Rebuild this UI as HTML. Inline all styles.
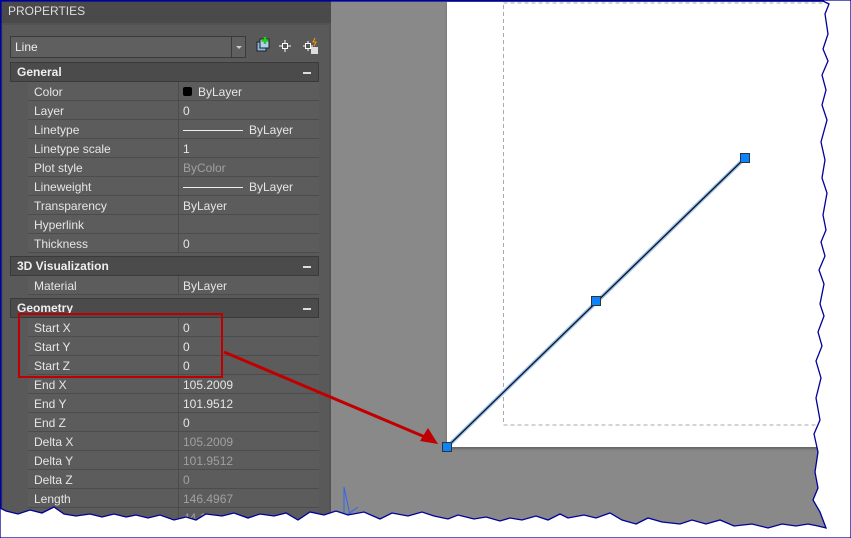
<!DOCTYPE html>
<html><head><meta charset="utf-8"><style>
*{margin:0;padding:0;box-sizing:border-box}
html,body{width:851px;height:538px;overflow:hidden}
body{background:#fff;position:relative;font-family:"Liberation Sans",sans-serif;font-size:12px}
#panel{position:absolute;left:0;top:0;width:331px;height:538px;background:#535353;overflow:hidden}
#title{position:absolute;left:0;top:0;width:331px;height:23px;background:#4a4a4a;color:#ddd;font-size:12px;padding:4px 0 0 8px}
#pbody{position:absolute;left:3px;top:25px;width:326px;height:513px;background:#595959}
#combo{position:absolute;left:10px;top:36px;width:236px;height:22px;background:#5f5f5f;border:1px solid #3a3a3a;color:#eee;padding:3px 0 0 4px}
#combo .dd{position:absolute;right:0;top:0;width:14px;height:20px;border-left:1px solid #3a3a3a}
#combo .dd:after{content:"";position:absolute;left:4px;top:9px;border:3px solid transparent;border-top:3px solid #ccc}
.hdr{position:absolute;left:10px;width:309px;height:20px;background:#4b4b4b;border:1px solid #3a3a3a;color:#eee;font-weight:bold;padding:2px 0 0 6px}
.hdr:after{content:"";position:absolute;right:7px;top:9px;width:8px;height:2px;background:#ddd}
.row{position:absolute;left:28px;width:291px;height:19px;background:#5c5c5c;border-bottom:1px solid #4c4c4c;color:#e6e6e6}
.row .l{position:absolute;left:6px;top:3px}
.row .v{position:absolute;left:150px;top:0;height:19px;border-left:1px solid #4c4c4c;padding:3px 0 0 4px;width:141px}
.g{color:#a0a0a0}
#canvas{position:absolute;left:331px;top:0;width:520px;height:538px;background:#898989}
#paper{position:absolute;left:447px;top:2px;width:400px;height:445px;background:#fff;box-shadow:0 2px 2px #666}
</style></head><body>
<div id="panel">
<div id="title">PROPERTIES</div>
<div id="pbody"></div>
<div id="combo">Line<div class="dd"></div></div>
<svg style="position:absolute;left:254px;top:36px" width="68" height="20">
<rect x="3" y="6" width="9" height="9" fill="#8ab4e0" stroke="#222"/><rect x="6" y="3" width="9" height="9" fill="#b0d0f0" stroke="#222"/><path d="M11 1v7M7.5 4.5h7" stroke="#2c2" stroke-width="2.5"/>
<path d="M25 10h12M31 4v12" stroke="#fff"/><rect x="28.5" y="7.5" width="5" height="5" fill="#555" stroke="#fff"/>
<path d="M49 10h10M54 5v10" stroke="#fff"/><rect x="51.5" y="7.5" width="5" height="5" fill="#555" stroke="#fff"/><rect x="57" y="11" width="7" height="7" fill="#ddd"/><path d="M61 2l-2 4h3l-2 4" stroke="#f90" fill="none"/>
</svg>
<div class="hdr" style="top:62px">General</div>
<div class="row" style="top:82px"><span class="l">Color</span><span class="v"><span style="display:inline-block;width:9px;height:9px;background:#000;border-radius:2px;margin-right:6px"></span>ByLayer</span></div>
<div class="row" style="top:101px"><span class="l">Layer</span><span class="v">0</span></div>
<div class="row" style="top:120px"><span class="l">Linetype</span><span class="v"><span style="display:inline-block;width:60px;height:1px;background:#eee;vertical-align:middle;margin-right:6px"></span>ByLayer</span></div>
<div class="row" style="top:139px"><span class="l">Linetype scale</span><span class="v">1</span></div>
<div class="row" style="top:158px"><span class="l">Plot style</span><span class="v g">ByColor</span></div>
<div class="row" style="top:177px"><span class="l">Lineweight</span><span class="v"><span style="display:inline-block;width:60px;height:1px;background:#eee;vertical-align:middle;margin-right:6px"></span>ByLayer</span></div>
<div class="row" style="top:196px"><span class="l">Transparency</span><span class="v">ByLayer</span></div>
<div class="row" style="top:215px"><span class="l">Hyperlink</span><span class="v"></span></div>
<div class="row" style="top:234px"><span class="l">Thickness</span><span class="v">0</span></div>
<div class="hdr" style="top:256px">3D Visualization</div>
<div class="row" style="top:276px"><span class="l">Material</span><span class="v">ByLayer</span></div>
<div class="hdr" style="top:298px">Geometry</div>
<div class="row" style="top:318px"><span class="l">Start X</span><span class="v">0</span></div>
<div class="row" style="top:337px"><span class="l">Start Y</span><span class="v">0</span></div>
<div class="row" style="top:356px"><span class="l">Start Z</span><span class="v">0</span></div>
<div class="row" style="top:375px"><span class="l">End X</span><span class="v">105.2009</span></div>
<div class="row" style="top:394px"><span class="l">End Y</span><span class="v">101.9512</span></div>
<div class="row" style="top:413px"><span class="l">End Z</span><span class="v">0</span></div>
<div class="row" style="top:432px"><span class="l">Delta X</span><span class="v g">105.2009</span></div>
<div class="row" style="top:451px"><span class="l">Delta Y</span><span class="v g">101.9512</span></div>
<div class="row" style="top:470px"><span class="l">Delta Z</span><span class="v g">0</span></div>
<div class="row" style="top:489px"><span class="l">Length</span><span class="v g">146.4967</span></div>
<div class="row" style="top:508px"><span class="l">Angle</span><span class="v g">44.1</span></div>
</div>
<div id="canvas"></div>
<div id="paper"></div>
<svg style="position:absolute;left:0;top:0" width="851" height="538">
<rect x="503.5" y="3" width="400" height="422" fill="none" stroke="#aaa" stroke-dasharray="4,3"/>
<line x1="447" y1="447" x2="745" y2="158" stroke="#9cc4ee" stroke-width="4"/>
<line x1="447" y1="447" x2="745" y2="158" stroke="#112" stroke-width="1.3"/>
<rect x="442.5" y="442.5" width="9" height="9" fill="#0a84ff" stroke="#333"/>
<rect x="591.5" y="296.5" width="9" height="9" fill="#0a84ff" stroke="#333"/>
<rect x="740.5" y="153.5" width="9" height="9" fill="#0a84ff" stroke="#333"/>
<path d="M344 487l6 28M344 487v30l14-10" stroke="#3366ee" fill="none"/>
<rect x="19" y="314" width="203" height="63" fill="none" stroke="#c00000" stroke-width="2"/>
<line x1="224" y1="352" x2="425" y2="437" stroke="#c00000" stroke-width="3"/>
<path d="M438 444l-18-3 8-13z" fill="#c00000"/>
<path d="M851 0H821L829 4L825 14L828 34L823 49L828 61L822 75L826 90L822 105L827 120L821 142L825 160L822 178L827 193L823 215L826 230L821 242L825 256L819 270L824 284L820 304L824 316L818 332L822 346L816 361L821 378L816 398L820 420L814 434L818 452L815 472L818 488L813 500L820 512L826 528L818 526L808 524L796 526L782 524L768 528L752 524L734 526L720 520L706 524L692 520L680 524L662 522L648 518L636 524L622 520L610 513L596 518L584 515L568 518L560 514L548 520L536 516L522 520L510 518L500 521L486 517L474 519L458 515L448 519L434 516L422 512L408 516L392 513L380 519L364 512L348 515L336 511L324 515L310 512L298 520L286 513L274 516L260 514L248 518L234 513L222 516L206 514L196 520L186 517L174 520L160 515L148 518L136 515L126 517L114 514L102 517L90 514L76 516L64 514L54 507L42 513L30 510L18 514L6 511L0 508V538H851Z" fill="#fff" stroke="#00009a" stroke-width="1.3"/>
<line x1="0" y1="0.8" x2="824" y2="0.8" stroke="#00009a" stroke-width="1.6"/>
<line x1="0.8" y1="0" x2="0.8" y2="508" stroke="#00009a" stroke-width="1.6"/>
</svg>
</body></html>
